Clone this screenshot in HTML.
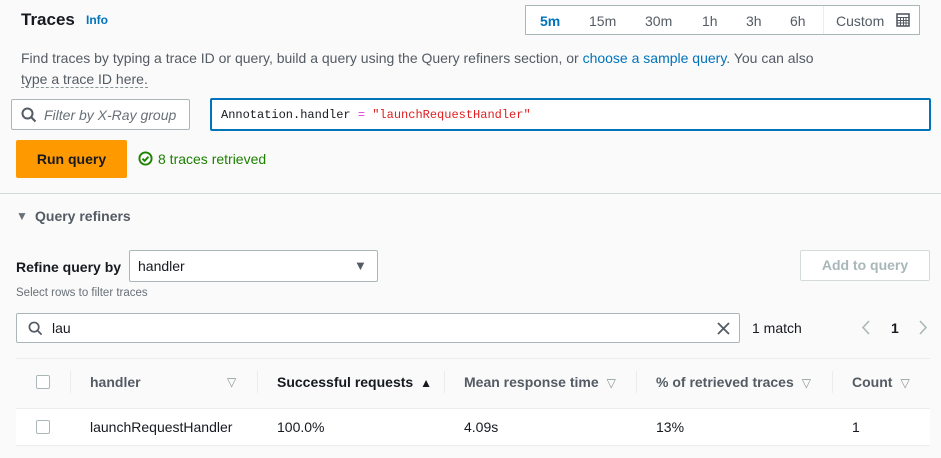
<!DOCTYPE html>
<html><head><style>
*{box-sizing:border-box;margin:0;padding:0}
body{width:941px;height:458px;background:#fafafa;font-family:"Liberation Sans",sans-serif;color:#16191f;position:relative;overflow:hidden;font-size:14px}
.a{position:absolute}
.b{font-weight:bold}
.cb{position:absolute;width:14px;height:14px;border:1px solid #aab7b8;border-radius:2px;background:#fff}
.vd{position:absolute;width:1px;height:22px;background:#eaeded;top:371px}
.th{position:absolute;top:374px;font-weight:bold;color:#545b64;font-size:14px}
.tri{font-size:12px;color:#879596;font-weight:normal;margin-left:8px}
.td{position:absolute;top:419px;font-size:14px}
</style></head><body>
<div class="a b" style="left:21px;top:10px;font-size:17px">Traces</div>
<div class="a b" style="left:86px;top:13px;font-size:12px;color:#0073bb">Info</div>
<div class="a" style="left:525px;top:5px;width:395px;height:30px;background:#fff;border:1px solid #aab7b8;font-size:14px;color:#545b64">
<span class="a b" style="left:14px;top:7px;color:#0073bb">5m</span>
<span class="a" style="left:63px;top:7px">15m</span>
<span class="a" style="left:119px;top:7px">30m</span>
<span class="a" style="left:176px;top:7px">1h</span>
<span class="a" style="left:220px;top:7px">3h</span>
<span class="a" style="left:264px;top:7px">6h</span>
<div class="a" style="left:297px;top:0;width:1px;height:28px;background:#eaeded"></div>
<span class="a" style="left:310px;top:7px">Custom</span>
<svg class="a" style="left:370px;top:7px" width="14" height="14" viewBox="0 0 14 14"><rect x="1" y="1" width="12" height="12" fill="none" stroke="#545b64" stroke-width="1.6"/><path d="M1 4.5h12M4.5 4.5v8M7.5 4.5v8M10 4.5v8M1 7.5h12M1 10h12" stroke="#545b64" stroke-width="1"/></svg>
</div>
<div class="a" style="left:21px;top:48px;color:#545b64;font-size:14px;line-height:21px;width:900px">Find traces by typing a trace ID or query, build a query using the Query refiners section, or <span style="color:#0073bb">choose a sample query</span>. You can also<br><span style="border-bottom:1px dashed #879596">type a trace ID here.</span></div>
<div class="a" style="left:11px;top:99px;width:179px;height:31px;background:#fff;border:1px solid #aab7b8;border-radius:2px">
<svg class="a" style="left:9px;top:7px" width="16" height="16" viewBox="0 0 16 16"><circle cx="6.5" cy="6.5" r="5" fill="none" stroke="#545b64" stroke-width="2"/><path d="M10 10l4.5 4.5" stroke="#545b64" stroke-width="2"/></svg>
<span class="a" style="left:32px;top:7px;font-style:italic;color:#687078">Filter by X-Ray group</span></div>
<div class="a" style="left:210px;top:98px;width:721px;height:33px;background:#fff;border:2px solid #0073bb;border-radius:2px;font-family:'Liberation Mono',monospace;font-size:12px">
<span class="a" style="left:9px;top:8px;white-space:pre">Annotation.handler <span style="color:#d63fd6">=</span> <span style="color:#e02020">"launchRequestHandler"</span></span></div>
<div class="a b" style="left:16px;top:140px;width:111px;height:38px;background:#ff9900;border-radius:2px;font-size:14px;line-height:38px;text-align:center">Run query</div>
<svg class="a" style="left:138px;top:151px" width="15" height="15" viewBox="0 0 16 16"><circle cx="8" cy="8" r="6.5" fill="none" stroke="#1d8102" stroke-width="2"/><path d="M4.8 8.2l2.3 2.3 4-4.3" fill="none" stroke="#1d8102" stroke-width="2"/></svg>
<div class="a" style="left:158px;top:151px;color:#1d8102;font-size:14px">8 traces retrieved</div>
<div class="a" style="left:0;top:193px;width:941px;height:1px;background:#d5dbdb"></div>
<div class="a" style="left:16px;top:209px;font-size:12px;color:#687078">▼</div>
<div class="a b" style="left:35px;top:208px;color:#545b64">Query refiners</div>
<div class="a b" style="left:16px;top:259px">Refine query by</div>
<div class="a" style="left:129px;top:250px;width:249px;height:32px;background:#fff;border:1px solid #aab7b8;border-radius:2px">
<span class="a" style="left:8px;top:7px">handler</span><span class="a" style="left:224px;top:7px;font-size:13px;color:#545b64">▼</span></div>
<div class="a b" style="left:800px;top:250px;width:130px;height:31px;border:1px solid #d5dbdb;background:#fff;border-radius:2px;text-align:center;line-height:29px;color:#aab7b8">Add to query</div>
<div class="a" style="left:16px;top:287px;font-size:11.5px;color:#687078">Select rows to filter traces</div>
<div class="a" style="left:16px;top:313px;width:724px;height:30px;background:#fff;border:1px solid #aab7b8;border-radius:2px">
<svg class="a" style="left:11px;top:7px" width="15" height="15" viewBox="0 0 16 16"><circle cx="6.5" cy="6.5" r="5" fill="none" stroke="#545b64" stroke-width="1.8"/><path d="M10 10l4.5 4.5" stroke="#545b64" stroke-width="1.8"/></svg>
<span class="a" style="left:35px;top:6px">lau</span>
<svg class="a" style="left:699px;top:7px" width="15" height="15" viewBox="0 0 15 15"><path d="M2 2l11 11M13 2L2 13" stroke="#545b64" stroke-width="1.8"/></svg></div>
<div class="a" style="left:752px;top:320px">1 match</div>
<svg class="a" style="left:861px;top:320px" width="10" height="15" viewBox="0 0 10 15"><path d="M8 1L2 7.5 8 14" fill="none" stroke="#aab7b8" stroke-width="1.6"/></svg>
<div class="a b" style="left:891px;top:320px">1</div>
<svg class="a" style="left:918px;top:320px" width="10" height="15" viewBox="0 0 10 15"><path d="M2 1l6 6.5L2 14" fill="none" stroke="#aab7b8" stroke-width="1.6"/></svg>
<div class="a" style="left:16px;top:358px;width:914px;height:1px;background:#eaeded"></div>
<div class="cb" style="left:36px;top:375px"></div>
<div class="vd" style="left:70px"></div>
<div class="th" style="left:90px">handler</div><span class="a" style="left:227px;top:375px;font-size:12px;color:#879596">▽</span>
<div class="vd" style="left:257px"></div>
<div class="th" style="left:277px;color:#16191f">Successful requests <span style="font-size:12px;margin-left:3px">▲</span></div>
<div class="vd" style="left:444px"></div>
<div class="th" style="left:464px">Mean response time<span class="tri">▽</span></div>
<div class="vd" style="left:636px"></div>
<div class="th" style="left:656px">% of retrieved traces<span class="tri">▽</span></div>
<div class="vd" style="left:832px"></div>
<div class="th" style="left:852px">Count<span class="tri">▽</span></div>
<div class="a" style="left:16px;top:408px;width:914px;height:38px;background:#fff;border-top:1px solid #eaeded;border-bottom:1px solid #eaeded"></div>
<div class="cb" style="left:36px;top:420px"></div>
<div class="td" style="left:90px">launchRequestHandler</div>
<div class="td" style="left:277px">100.0%</div>
<div class="td" style="left:464px">4.09s</div>
<div class="td" style="left:656px">13%</div>
<div class="td" style="left:852px">1</div>
</body></html>
